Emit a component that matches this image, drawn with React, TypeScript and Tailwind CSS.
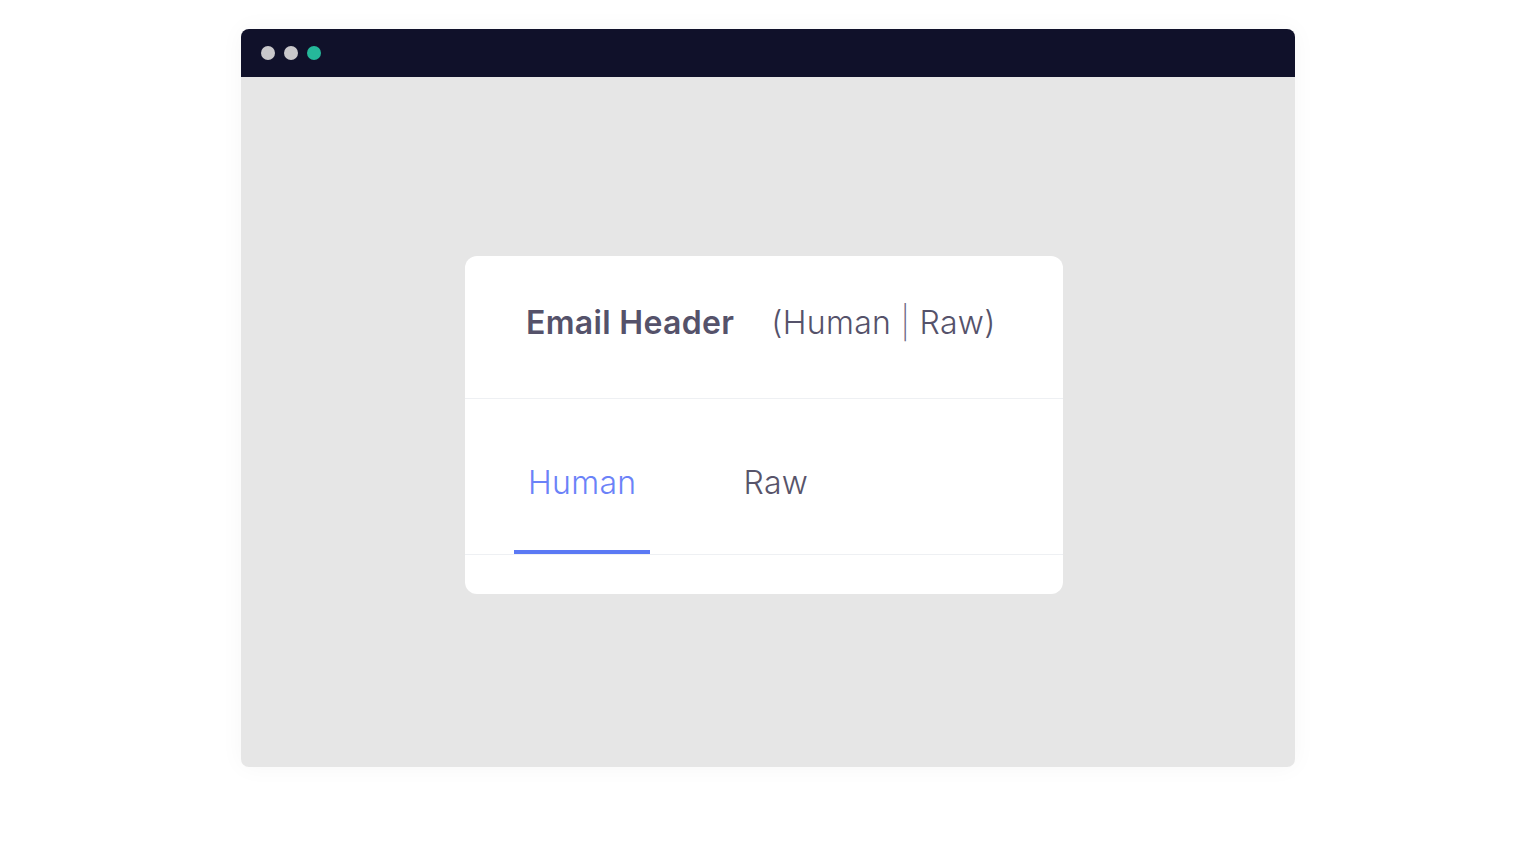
export default function App() {
  return (
    <div className="min-h-screen w-full bg-white pt-[29px]" style={{ fontFamily: "Inter, 'Noto Sans', sans-serif" }}>
      <div className="mx-auto h-[738px] w-[1054px] overflow-hidden rounded-[8px] bg-[#e6e6e6] shadow-[0_0_24px_rgba(0,0,0,0.04)]">
        {/* title bar */}
        <div className="flex h-[48px] items-center gap-[9px] bg-[#10112a] pl-[20px]">
          <span className="h-[14px] w-[14px] rounded-full bg-[#c9c8cb]" />
          <span className="h-[14px] w-[14px] rounded-full bg-[#c9c8cb]" />
          <span className="h-[14px] w-[14px] rounded-full bg-[#25b89a]" />
        </div>

        <div className="pl-[224px] pt-[179px]">
          <div className="w-[598px] overflow-hidden rounded-[12px] bg-white">
            <div className="flex h-[143px] items-center border-b border-[#eef0f3] pb-[8px] pl-[61px] text-[32px] tracking-[0.01em] text-[#55526a]">
              <span className="font-semibold">Email Header</span>
              <span className="ml-[37px] font-light">
                (Human <span className="font-extralight text-[#6a6780]">|</span> Raw)
              </span>
            </div>
            <div className="flex h-[156px] items-stretch border-b border-[#eef0f3] pl-[49px] text-[32px] tracking-[0.01em]">
              <div className="relative flex items-center px-[14px] pt-[12px] font-light text-[#6b82f8]">
                Human
                <span className="absolute bottom-0 left-0 right-0 h-[4px] bg-[#5b79f4]" />
              </div>
              <div className="ml-[79px] flex items-center px-[14px] pt-[12px] font-light text-[#58546a]">Raw</div>
            </div>
            <div className="h-[39px]" />
          </div>
        </div>
      </div>
    </div>
  );
}
